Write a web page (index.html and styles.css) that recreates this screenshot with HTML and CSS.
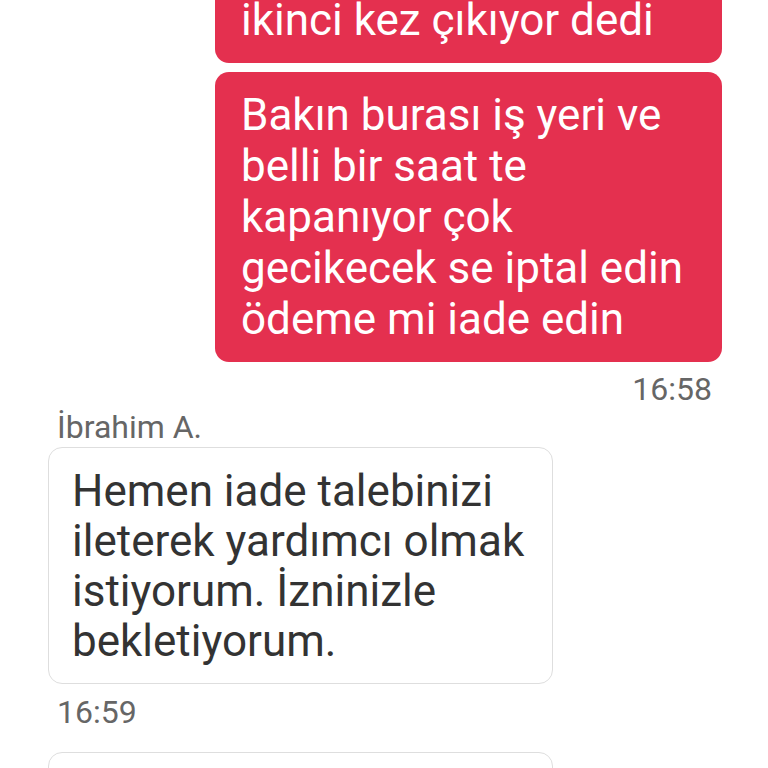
FILE: index.html
```html
<!DOCTYPE html>
<html lang="tr">
<head>
    <meta charset="UTF-8">
    <meta name="viewport" content="width=device-width, initial-scale=1.0">
    <title>Sohbet</title>
    <link rel="stylesheet" href="styles.css">
</head>
<body>
    <div class="chat">
        <div class="group outgoing first">
            <div class="bubble out">ikinci kez çıkıyor dedi</div>
            <div class="bubble out">Bakın burası iş yeri ve belli bir saat te kapanıyor çok gecikecek se iptal edin ödeme mi iade edin</div>
            <div class="time">16:58</div>
        </div>

        <div class="group incoming">
            <div class="sender">İbrahim A.</div>
            <div class="bubble in">Hemen iade talebinizi ileterek yardımcı olmak istiyorum. İzninizle bekletiyorum.</div>
            <div class="time">16:59</div>
        </div>

        <div class="group incoming next">
            <div class="bubble in">&nbsp;</div>
        </div>
    </div>
</body>
</html>
```

FILE: styles.css
```css
* {
    margin: 0;
    padding: 0;
    box-sizing: border-box;
}

html, body {
    height: 100%;
    overflow: hidden;
}

body {
    font-family: 'Roboto', 'Noto Sans', sans-serif;
    background: #ffffff;
}

.chat {
    display: flex;
    flex-direction: column;
    padding: 0 46px 0 48px;
}

.group {
    display: flex;
    flex-direction: column;
}

.group.first {
    margin-top: -23px;
}

.outgoing {
    align-items: flex-end;
}

.outgoing .bubble + .bubble {
    margin-top: 9px;
}

.incoming {
    align-items: flex-start;
}

.group.next {
    margin-top: 20px;
}

.bubble {
    font-size: 44px;
    line-height: 51px;
    padding: 18px 20px 17px 26px;
    border-radius: 14px;
    width: 507px;
}

.bubble.out {
    background: #e4304f;
    color: #ffffff;
}

.bubble.in {
    width: 505px;
    line-height: 50px;
    background: #ffffff;
    color: #333333;
    border: 1px solid #dedede;
    padding: 18px 18px 17px 23px;
    margin-top: 2px;
}

.time, .sender {
    font-size: 32px;
    line-height: 36px;
    color: #666666;
}

.outgoing .time {
    margin-top: 9px;
    margin-right: 10px;
}

.incoming .time {
    margin-top: 10px;
    margin-left: 9px;
}

.sender {
    margin-top: 2px;
    margin-left: 9px;
}
```
